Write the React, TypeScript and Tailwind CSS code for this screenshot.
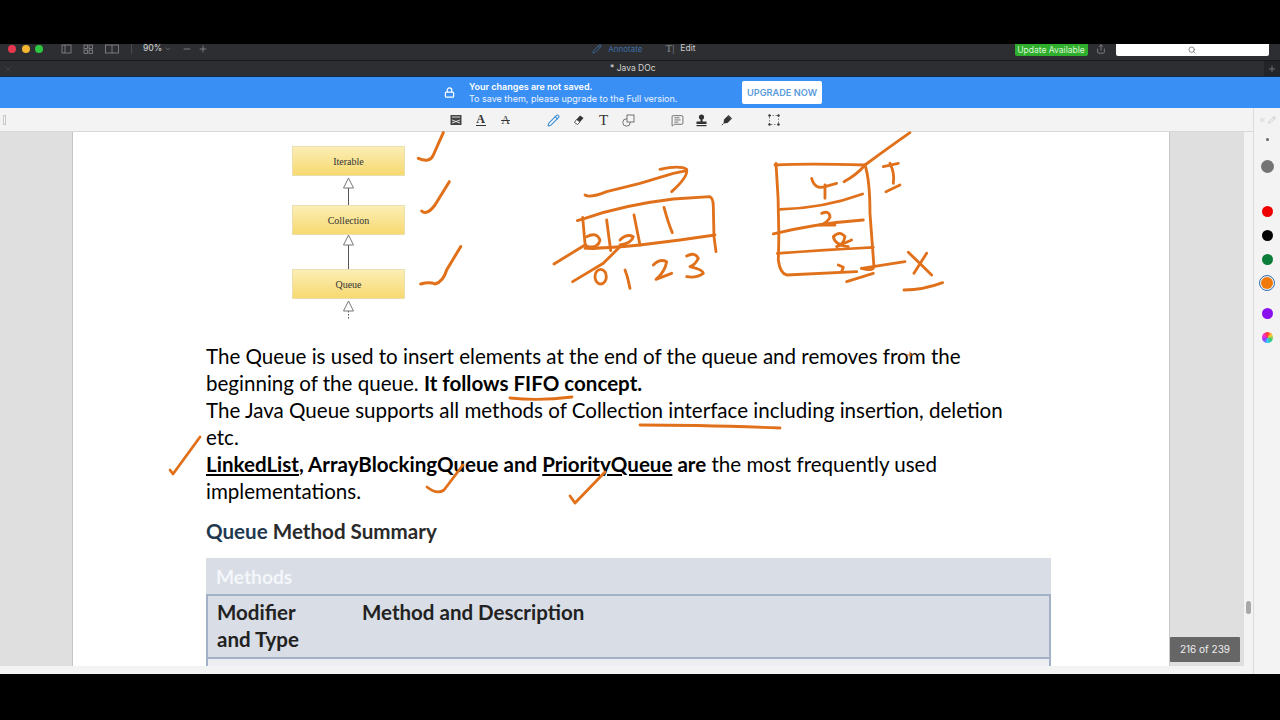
import React from "react";
import { Lock, Search, Share, ChevronDown, Minus, Plus, X, Pencil, MessageSquareText, ChevronsLeft } from "lucide-react";

const Ink = "#e0701a";

function Annotations() {
  return (
    <svg className="absolute left-0 top-0 pointer-events-none" width="1280" height="720" viewBox="0 0 1280 720" fill="none" stroke={Ink} strokeLinecap="round" strokeLinejoin="round">
      <g transform="translate(280 130) scale(0.3333)" strokeWidth="9">
        <path d="M415 85 Q450 100 460 75 L490 8" />
        <path d="M425 243 Q440 258 465 225 L508 155" />
        <path d="M422 462 Q450 455 465 462 Q490 455 500 420 L542 350" />
      </g>
      <g transform="translate(540 130) scale(0.3333)" strokeWidth="8.5">
        <path d="M135 195 Q150 205 200 185 L300 160 L400 130 L440 122" />
        <path d="M360 118 Q420 105 440 118 Q445 140 395 185" />
        <path d="M112 272 L135 265 Q250 225 400 207 L510 200 Q520 205 520 230 L522 320 L528 365" />
        <path d="M128 262 L135 340 Q140 358 165 355" />
        <path d="M135 355 Q200 355 300 345 L420 330 L525 315" />
        <path d="M200 270 L212 362 M282 255 L300 345 M372 232 Q385 280 397 308" />
        <path d="M140 320 Q170 305 180 330 Q175 355 145 350" />
        <path d="M240 330 Q260 310 280 320 Q275 340 240 345" />
        <path d="M42 402 L135 345 M98 455 L190 400 L245 345" />
        <ellipse cx="182" cy="440" rx="17" ry="22" />
        <path d="M255 420 L262 440 L270 475" />
        <path d="M340 405 Q360 385 380 395 Q375 425 348 448 L395 430" />
        <path d="M440 378 Q465 365 475 385 Q465 405 450 410 Q490 420 490 430 Q470 445 440 440" />
        <path d="M705 105 Q800 100 975 105" />
        <path d="M708 100 Q720 250 715 390 Q720 430 740 435 L950 425" />
        <path d="M975 105 Q990 150 990 250 L1002 410 Q1000 425 965 415" />
        <path d="M912 155 Q950 135 975 105 Q1050 50 1110 8" />
        <path d="M720 238 Q850 235 968 192 M700 312 Q830 280 970 270 M712 370 Q850 360 1000 352" />
        <path d="M815 145 Q825 180 855 170 L890 160 M855 165 L855 205" />
        <path d="M845 250 Q870 240 870 262 Q860 280 840 285 L885 285" />
        <path d="M880 320 Q900 300 915 320 Q910 345 890 350 L935 330 M880 320 Q885 345 925 350" />
        <path d="M895 405 L910 412 L905 425" />
        <path d="M965 415 L1095 395 M920 455 L1000 430" />
        <path d="M1105 367 Q1140 400 1175 435 M1160 370 L1122 430" />
        <path d="M1092 480 Q1150 480 1208 458" />
        <path d="M1030 110 L1075 100 M1050 100 Q1065 130 1060 160 M1038 185 L1080 165" />
      </g>
      <g strokeWidth="2.8">
        <path d="M510 398 Q540 401 572 397" />
        <path d="M640 425 Q700 425 780 428" />
        <path d="M170 470 L173 474 L200 437" />
        <path d="M427 487 Q437 495 444 490 L463 465" />
        <path d="M570 496 L575 503 L605 472" />
        <path d="M907 355 L913 355 M910 352 L910 358" strokeWidth="1" />
      </g>
    </svg>
  );
}

function ClassBox({ label }: { label: string }) {
  return (
    <div className="w-[113px] h-[30px] pt-[1px] flex items-center justify-center border border-[#eadfae] bg-gradient-to-b from-[#fbeeb4] to-[#f7d96f] font-['Liberation_Serif',serif] text-[10px] font-medium text-[#333]">
      {label}
    </div>
  );
}

function UpArrow({ h, dashed }: { h: number; dashed?: boolean }) {
  return (
    <svg width="13" height={h} viewBox={`0 0 13 ${h}`} fill="none" stroke="#555" className="block">
      <path d={`M6.5 11 V${h}`} strokeDasharray={dashed ? "1.5 1.5" : undefined} />
      <path d="M6.5 1 L11.5 11 H1.5 Z" fill="#fff" stroke="#777" />
    </svg>
  );
}

function Dot({ c }: { c: string }) {
  return <div className={`w-[11px] h-[11px] rounded-full ${c}`} />;
}

function TopIcon({ children }: { children: React.ReactNode }) {
  return (
    <svg width="14" height="10" viewBox="0 0 14 10" fill="none" stroke="#8a8b8f" strokeWidth="0.8">
      {children}
    </svg>
  );
}

export default function App() {
  return (
    <div className="relative w-[1280px] h-[720px] bg-black overflow-hidden flex flex-col font-['Inter',sans-serif]">
      <div className="h-[44px] shrink-0" />
      {/* title bar */}
      <div className="h-[17px] shrink-0 bg-[#2d2e32] border-b border-[#17181a] flex items-center pb-[7px] text-[#c8c8c8] text-[8.5px]">
        <div className="flex items-center gap-[5px] ml-[8px]">
          <div className="w-[8px] h-[8px] rounded-full bg-[#e8384f]" />
          <div className="w-[8px] h-[8px] rounded-full bg-[#f5b731] ml-[1px]" />
          <div className="w-[8px] h-[8px] rounded-full bg-[#2dc840]" />
        </div>
        <div className="flex items-center ml-[18px] gap-[8px]">
          <TopIcon><rect x="1" y="1" width="9" height="8" /><path d="M4 1 V9" /></TopIcon>
          <TopIcon><rect x="1" y="1" width="3.5" height="3.5" /><rect x="6" y="1" width="3.5" height="3.5" /><rect x="1" y="6" width="3.5" height="3.5" /><rect x="6" y="6" width="3.5" height="3.5" /></TopIcon>
          <TopIcon><rect x="0.5" y="1" width="13" height="8" /><path d="M7 1 V9" /></TopIcon>
        </div>
        <div className="w-px h-[10px] bg-[#4a4b4f] ml-[12px]" />
        <span className="ml-[11px] font-medium">90%</span>
        <ChevronDown size={8} className="ml-[2px] text-[#77787c]" />
        <Minus size={10} className="ml-[10px] text-[#8a8b8f]" />
        <Plus size={10} className="ml-[6px] text-[#8a8b8f]" />
        <Pencil size={10} className="ml-[384px] text-[#3d6da6]" />
        <span className="ml-[6px] text-[#3d6da6] text-[8px]">Annotate</span>
        <span className="ml-[23px] text-[#8a8b8f] font-['Liberation_Serif',serif] text-[11px]">T|</span>
        <span className="ml-[6px] text-[8.5px]">Edit</span>
        <div className="ml-[319px] w-[73px] h-[12px] self-start bg-[#2fae2d] rounded-b-[2px] flex items-center justify-center text-[#d9f5d6] text-[8.5px]">
          Update Available
        </div>
        <Share size={10} className="ml-[8px] text-[#8a8b8f]" />
        <div className="ml-[10px] w-[153px] h-[12px] self-start bg-white rounded-b-[2px] flex items-center justify-center">
          <Search size={8} className="text-[#555]" />
        </div>
      </div>
      {/* tab bar */}
      <div className="h-[16px] shrink-0 bg-[#2d2e32] border-b border-[#0f2a4a] flex items-center relative">
        <X size={8} className="ml-[4px] text-[#48494d]" />
        <span className="absolute left-[610px] text-[8.5px] text-[#d4d4d4]">* Java DOc</span>
        <div className="ml-auto w-[16px] h-full bg-[#232427] flex items-center justify-center">
          <Plus size={10} className="text-[#77787c]" />
        </div>
      </div>
      {/* banner */}
      <div className="h-[31px] shrink-0 bg-[#3a8ff5] flex items-center text-white">
        <Lock size={11} strokeWidth={2.6} className="ml-[444px]" />
        <div className="ml-[14px] text-[9px] leading-[12px] w-[273px]">
          <div className="font-semibold">Your changes are not saved.</div>
          <div className="text-[#eaf3ff]">To save them, please upgrade to the Full version.</div>
        </div>
        <div className="w-[80px] h-[23px] bg-white rounded-[2px] flex items-center justify-center text-[#5a9bdc] text-[9.2px] font-semibold">
          UPGRADE NOW
        </div>
      </div>
      <div className="flex-1 min-h-0 flex">
        <div className="w-[1253px] shrink-0 flex flex-col">
          {/* tools */}
          <div className="h-[24px] shrink-0 pt-[1px] bg-[#f3f3f3] border-b border-[#d8d8d8] flex items-center text-[#333] relative">
            <div className="absolute left-[3px] top-[7px] w-[3px] h-[10px] border border-[#c8c8c8]" />
            <div className="flex items-center ml-[444px]">
              <div className="w-[24px] flex justify-center">
                <svg width="12" height="12" viewBox="0 0 12 12"><rect x="0.5" y="1" width="11" height="10" fill="#444" /><path d="M2 3 H10 M2 6 L10 9 M10 6 L2 9" stroke="#eee" strokeWidth="0.9" /></svg>
              </div>
              <div className="w-[25px] flex flex-col items-center font-['Liberation_Serif',serif] text-[12px] leading-[11px] font-bold">
                <span>A</span>
                <div className="w-[10px] h-px bg-[#333]" />
              </div>
              <div className="w-[25px] flex justify-center font-['Liberation_Serif',serif] text-[12px] leading-[12px]">
                <span className="line-through">A</span>
              </div>
            </div>
            <div className="flex items-center ml-[23px]">
              <div className="w-[25px] flex justify-center"><Pencil size={13} className="text-[#3a8fd9]" /></div>
              <div className="w-[25px] flex justify-center">
                <svg width="12" height="12" viewBox="0 0 12 12"><path d="M7 1.5 L10.5 4 L7 8 L3.5 5.5 Z" fill="#333" /><path d="M3.5 5.5 L7 8 L4.5 10.5 L1.5 8.5 Z" fill="#fff" stroke="#333" strokeWidth="0.8" /></svg>
              </div>
              <div className="w-[25px] flex justify-center font-['Liberation_Serif',serif] text-[15px] leading-[15px]">T</div>
              <div className="w-[25px] flex justify-center">
                <svg width="13" height="13" viewBox="0 0 13 13" fill="none" stroke="#555" strokeWidth="0.8"><circle cx="4.5" cy="8.5" r="3.7" /><rect x="5" y="1" width="7" height="7" fill="#f3f3f3" /></svg>
              </div>
            </div>
            <div className="flex items-center ml-[24px]">
              <div className="w-[24px] flex justify-center"><MessageSquareText size={13} strokeWidth={1.2} /></div>
              <div className="w-[25px] flex justify-center">
                <svg width="13" height="13" viewBox="0 0 13 13" fill="#333"><circle cx="6.5" cy="3" r="2.6" /><rect x="5.5" y="4" width="2" height="4" /><rect x="1.5" y="7.5" width="10" height="2.5" /><rect x="1.5" y="11" width="10" height="1.2" /></svg>
              </div>
              <div className="w-[25px] flex justify-center">
                <svg width="12" height="12" viewBox="0 0 12 12" fill="#333"><path d="M6.5 2 L10 5.5 L6.5 9 L2.5 9.5 L3 5.5 Z" /><path d="M7.5 1 L11 4.5 L10 5.5 L6.5 2 Z" /><path d="M2.5 9.5 L0.8 11.2" stroke="#333" strokeWidth="0.9" /></svg>
              </div>
            </div>
            <div className="ml-[23px] w-[24px] flex justify-center">
              <svg width="12" height="12" viewBox="0 0 12 12" fill="none" stroke="#555" strokeWidth="0.7"><rect x="1.5" y="1.5" width="9" height="9" strokeDasharray="1.5 1.5" /><g fill="#333" stroke="none"><circle cx="1.5" cy="1.5" r="1.2" /><circle cx="10.5" cy="1.5" r="1.2" /><circle cx="1.5" cy="10.5" r="1.2" /><circle cx="10.5" cy="10.5" r="1.2" /></g></svg>
            </div>
          </div>
          {/* document area */}
          <div className="flex-1 min-h-0 flex">
            <div className="w-[73px] shrink-0 bg-[#dfdfdf] border-r border-[#c4c4c4]" />
            <div className="w-[1096px] shrink-0 bg-white overflow-hidden pl-[133px] font-['Lato',sans-serif] text-black">
              <div className="ml-[86px] pt-[14px] flex flex-col items-center w-[113px]">
                <ClassBox label="Iterable" />
                <div className="mt-[1px]"><UpArrow h={28} /></div>
                <ClassBox label="Collection" />
                <div className="mt-[-1px]"><UpArrow h={35} /></div>
                <ClassBox label="Queue" />
                <div className="mt-[1px]"><UpArrow h={20} dashed /></div>
              </div>
              <div className="mt-[23px] text-[20.55px] leading-[27px] whitespace-nowrap">
                The Queue is used to insert elements at the end of the queue and removes from the<br />
                beginning of the queue. <b>It follows FIFO concept.</b><br />
                The Java Queue supports all methods of Collection interface including insertion, deletion<br />
                etc.<br />
                <b><u>LinkedList</u>, ArrayBlockingQueue and <u>PriorityQueue</u> are</b> the most frequently used<br />
                implementations.
              </div>
              <div className="mt-[13px] text-[20.6px] leading-[27px] font-bold text-[#2a2a2a]">
                <span className="text-[#1f3a50]">Queue</span> Method Summary
              </div>
              <div className="mt-[13px] w-[845px] bg-[#d8dde6]">
                <div className="h-[36px] pl-[10px] pt-[2px] flex items-center text-[19.2px] font-bold text-[#f4f6fa]">Methods</div>
                <div className="border-2 border-[#a3b1c6] flex h-[65px] pt-[3px] pl-[9px] text-[20.5px] leading-[27px] font-bold text-[#222]">
                  <div className="w-[145px]">Modifier<br />and Type</div>
                  <div>Method and Description</div>
                </div>
                <div className="h-[20px] border-x-2 border-[#a3b1c6] bg-[#eceef2]" />
              </div>
            </div>
            <div className="w-[75px] shrink-0 bg-[#dfdfdf] border-l border-[#c8c8c8]" />
            <div className="flex-1 bg-[#f3f3f3] flex justify-center">
              <div className="mt-[469px] w-[5px] h-[13px] rounded-full bg-[#a8a8a8]" />
            </div>
          </div>
          <div className="h-[8px] shrink-0 bg-[#f3f3f3]" />
        </div>
        {/* right panel */}
        <div className="flex-1 bg-[#f3f3f3] border-l border-[#dcdcdc] flex flex-col items-center">
          <div className="h-[24px] flex items-center justify-center gap-[2px] text-[#c0c0c0]">
            <ChevronsLeft size={8} />
            <Pencil size={8} />
          </div>
          <div className="mt-[6px] w-[3px] h-[3px] rounded-full bg-[#666]" />
          <div className="mt-[19px] w-[13px] h-[13px] rounded-full bg-[#747474]" />
          <div className="mt-[33px]"><Dot c="bg-[#ee0000]" /></div>
          <div className="mt-[13px]"><Dot c="bg-black" /></div>
          <div className="mt-[13px]"><Dot c="bg-[#0a7d3a]" /></div>
          <div className="mt-[10px] w-[16px] h-[16px] rounded-full border border-[#2f6db5] flex items-center justify-center">
            <div className="w-[12px] h-[12px] rounded-full bg-[#ef7a0a]" />
          </div>
          <div className="mt-[17px]"><Dot c="bg-[#8a10ee]" /></div>
          <div className="mt-[13px] w-[11px] h-[11px] rounded-full bg-[conic-gradient(#f33,#fc3,#3c6,#3cf,#93f,#f3c,#f33)]" />
        </div>
      </div>
      <div className="h-[46px] shrink-0 bg-black" />
      <Annotations />
      <div className="absolute left-[1170px] top-[637px] w-[70px] h-[25px] bg-[#666] rounded-[1px] flex items-center justify-center text-[10px] text-[#eee]">
        216 of 239
      </div>
    </div>
  );
}
